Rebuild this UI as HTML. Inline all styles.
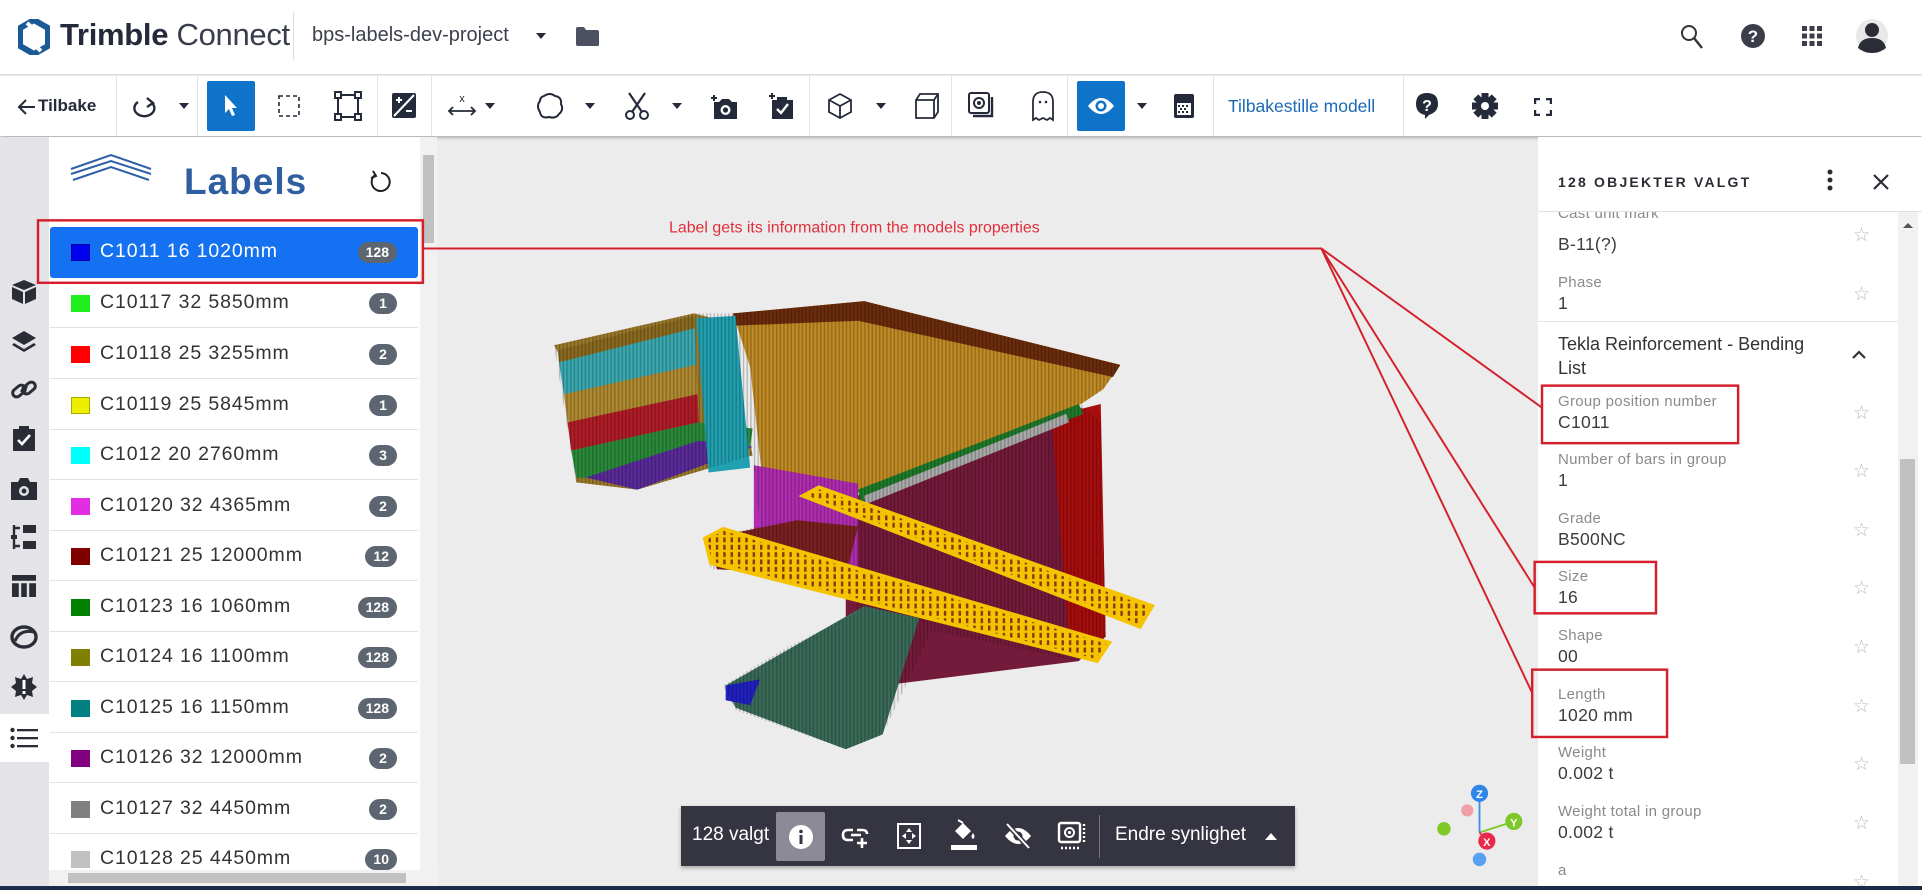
<!DOCTYPE html>
<html><head><meta charset="utf-8">
<style>
*{box-sizing:border-box;margin:0;padding:0}
body{width:1922px;height:890px;overflow:hidden;position:relative;background:#ececec;font-family:"Liberation Sans",sans-serif;color:#252a3a}
.abs{position:absolute}
#hdr{left:0;top:0;width:1922px;height:75px;background:#fff;border-bottom:1px solid #ddd}
#tb{left:0;top:76px;width:1922px;height:60px;background:#fff;box-shadow:0 2px 3px rgba(0,0,0,.25)}
.dv{position:absolute;top:0;width:1px;height:60px;background:#e2e2e2}
.ic{position:absolute;top:15px}
.car{position:absolute;top:27px;width:0;height:0;border-left:5px solid transparent;border-right:5px solid transparent;border-top:6px solid #252a3a}
#rail{left:0;top:137px;width:49px;height:750px;background:#e4e4e8}
#panel{left:49px;top:137px;width:372px;height:733px;background:#fff}
.row{position:absolute;left:50px;width:368px;height:50px;border-bottom:1px solid #e3e3e3;background:#fff}
.sw{position:absolute;left:21px;top:17px;width:19px;height:17px}
.rt{position:absolute;left:50px;top:13px;font-size:19.5px;letter-spacing:.9px;color:#333}
.bd{position:absolute;right:21px;top:15px;height:21px;min-width:28px;padding:0 8px;border-radius:11px;background:#5d6670;color:#fff;font-size:14px;font-weight:bold;line-height:21px;text-align:center}
#rp{left:1538px;top:137px;width:384px;height:750px;background:#fff}
.pl{position:absolute;left:20px;font-size:15px;color:#8a8a8a;letter-spacing:.3px}
.pv{position:absolute;left:20px;font-size:17.5px;color:#3c3c3c;letter-spacing:.3px}
.st{position:absolute;left:315px;font-size:19px;color:#bbb}
</style></head><body>

<!-- header -->
<div id="hdr" class="abs">
  <svg class="abs" style="left:18px;top:19px" width="32" height="36" viewBox="0 0 32 36">
    <path d="M16 1 L30 9 L30 27 L16 35 L2 27 L2 9 Z" fill="none" stroke="#1a5a96" stroke-width="6"/>
    <path d="M9 4 L18 12 M23 32 L14 24" stroke="#fff" stroke-width="4"/>
  </svg>
  <div class="abs" style="left:60px;top:17px;font-size:31px;color:#252a3a;letter-spacing:-.3px"><b style="font-weight:600">Trimble</b> <span style="font-weight:300;color:#3a3e4c">Connect</span></div>
  <div class="abs" style="left:293px;top:12px;width:1px;height:48px;background:#ddd"></div>
  <div class="abs" style="left:312px;top:24px;font-size:20px;color:#3c3f4c">bps-labels-dev-project</div>
  <div class="car" style="left:536px;top:33px"></div>
  <svg class="abs" style="left:575px;top:26px" width="25" height="21" viewBox="0 0 25 21"><path d="M1 3 Q1 1 3 1 L9 1 L11 4 L22 4 Q24 4 24 6 L24 19 Q24 20 22 20 L3 20 Q1 20 1 18Z" fill="#4d5060"/></svg>
  <svg class="abs" style="left:1680px;top:24px" width="24" height="26" viewBox="0 0 24 26"><circle cx="9" cy="9" r="7" fill="none" stroke="#333" stroke-width="2"/><path d="M14 14 L22 24" stroke="#333" stroke-width="2.4"/></svg>
  <svg class="abs" style="left:1740px;top:22px" width="26" height="28" viewBox="0 0 26 28"><circle cx="13" cy="14" r="12" fill="#3b3e48"/><text x="13" y="20" font-size="17" font-weight="bold" fill="#fff" text-anchor="middle" font-family="Liberation Sans">?</text></svg>
  <svg class="abs" style="left:1802px;top:26px" width="20" height="20" viewBox="0 0 20 20" fill="#3b3e48"><rect x="0" y="0" width="5" height="5"/><rect x="7.5" y="0" width="5" height="5"/><rect x="15" y="0" width="5" height="5"/><rect x="0" y="7.5" width="5" height="5"/><rect x="7.5" y="7.5" width="5" height="5"/><rect x="15" y="7.5" width="5" height="5"/><rect x="0" y="15" width="5" height="5"/><rect x="7.5" y="15" width="5" height="5"/><rect x="15" y="15" width="5" height="5"/></svg>
  <svg class="abs" style="left:1855px;top:18px" width="34" height="36" viewBox="0 0 34 36"><ellipse cx="17" cy="18" rx="16" ry="17" fill="#e8e8ea"/><circle cx="17" cy="12" r="7" fill="#2b2d36"/><path d="M3 30 Q5 20 17 20 Q29 20 31 30 Q25 35 17 35 Q9 35 3 30Z" fill="#2b2d36"/></svg>
</div>

<!-- toolbar -->
<div id="tb" class="abs">
  <svg class="ic" style="left:16px;top:22px" width="20" height="18" viewBox="0 0 20 18"><path d="M19 9 H3 M10 2 L3 9 L10 16" fill="none" stroke="#252a3a" stroke-width="2"/></svg>
  <div class="abs" style="left:38px;top:20px;font-size:17px;font-weight:bold;color:#252a3a">Tilbake</div>
  <div class="dv" style="left:116px"></div>
  <svg class="ic" style="left:132px;top:18px" width="28" height="26" viewBox="0 0 28 26"><path d="M6 8 A10 8 0 1 0 20 9" fill="none" stroke="#252a3a" stroke-width="2.4"/><path d="M15 4 L21 9 L15 13" fill="none" stroke="#252a3a" stroke-width="2.4"/></svg>
  <div class="car" style="left:179px"></div>
  <div class="dv" style="left:197px"></div>
  <div class="abs" style="left:207px;top:5px;width:48px;height:50px;background:#0f74c9;border-radius:2px"></div>
  <svg class="ic" style="left:223px;top:18px" width="16" height="24" viewBox="0 0 16 24"><path d="M2 1 L2 19 L6 15 L9 22 L12 21 L9 14 L14 14 Z" fill="#fff"/></svg>
  <svg class="ic" style="left:277px;top:18px" width="24" height="24" viewBox="0 0 24 24"><rect x="2" y="2" width="20" height="20" fill="none" stroke="#252a3a" stroke-width="1.6" stroke-dasharray="4 3"/></svg>
  <svg class="ic" style="left:334px;top:15px" width="28" height="30" viewBox="0 0 28 30"><rect x="4" y="4" width="20" height="22" fill="none" stroke="#252a3a" stroke-width="2"/><g fill="#fff" stroke="#252a3a" stroke-width="2"><rect x="1" y="1" width="6" height="6"/><rect x="21" y="1" width="6" height="6"/><rect x="1" y="23" width="6" height="6"/><rect x="21" y="23" width="6" height="6"/></g></svg>
  <div class="dv" style="left:377px"></div>
  <svg class="ic" style="left:391px;top:16px" width="26" height="27" viewBox="0 0 26 27"><rect x="1" y="1" width="24" height="25" rx="2" fill="#252a3a"/><path d="M3 24 L23 3" stroke="#fff" stroke-width="2"/><path d="M5 8 H11 M8 5 V11 M15 19 H21" stroke="#fff" stroke-width="2"/></svg>
  <div class="dv" style="left:431px"></div>
  <svg class="ic" style="left:447px;top:15px" width="30" height="30" viewBox="0 0 30 30"><text x="15" y="11" font-size="11" text-anchor="middle" fill="#252a3a" font-family="Liberation Sans">x</text><path d="M2 20 H28 M6 16 L2 20 L6 24 M24 16 L28 20 L24 24" fill="none" stroke="#252a3a" stroke-width="1.8"/></svg>
  <div class="car" style="left:485px"></div>
  <svg class="ic" style="left:536px;top:16px" width="28" height="28" viewBox="0 0 28 28"><path d="M8 4 Q14 0 19 4 Q26 5 25 12 Q28 18 23 22 Q20 27 13 25 Q5 27 4 20 Q0 14 4 9 Q4 5 8 4Z" fill="none" stroke="#252a3a" stroke-width="2"/></svg>
  <div class="car" style="left:585px"></div>
  <svg class="ic" style="left:624px;top:15px" width="26" height="30" viewBox="0 0 26 30"><circle cx="6" cy="24" r="4" fill="none" stroke="#252a3a" stroke-width="2"/><circle cx="20" cy="24" r="4" fill="none" stroke="#252a3a" stroke-width="2"/><path d="M8 21 L21 2 M18 21 L5 2" stroke="#252a3a" stroke-width="2.2"/></svg>
  <div class="car" style="left:672px"></div>
  <svg class="ic" style="left:711px;top:13px" width="28" height="32" viewBox="0 0 28 32"><path d="M3 6 V12 M0 9 H6" stroke="#252a3a" stroke-width="2"/><path d="M3 13 H8 L11 10 H18 L21 13 H26 V30 H3Z" fill="#252a3a"/><circle cx="14.5" cy="21" r="5" fill="#fff"/><circle cx="14.5" cy="21" r="2.6" fill="#252a3a"/></svg>
  <svg class="ic" style="left:769px;top:13px" width="26" height="32" viewBox="0 0 26 32"><path d="M3 4 V10 M0 7 H6" stroke="#252a3a" stroke-width="2"/><path d="M3 11 H8 V8 H18 V11 H24 V30 H3Z" fill="#252a3a"/><path d="M8 20 L12 24 L19 15" fill="none" stroke="#fff" stroke-width="2.4"/></svg>
  <div class="dv" style="left:809px"></div>
  <svg class="ic" style="left:827px;top:16px" width="26" height="28" viewBox="0 0 26 28"><path d="M13 2 L24 8 L24 20 L13 26 L2 20 L2 8Z M2 8 L13 14 L24 8 M13 14 V26" fill="none" stroke="#252a3a" stroke-width="1.8"/></svg>
  <div class="car" style="left:876px"></div>
  <svg class="ic" style="left:914px;top:16px" width="26" height="28" viewBox="0 0 26 28"><path d="M6 2 H24 V20 L20 26 H2 V8Z M2 8 H20 V26 M20 8 L24 2" fill="none" stroke="#252a3a" stroke-width="1.8"/></svg>
  <div class="dv" style="left:951px"></div>
  <svg class="ic" style="left:967px;top:15px" width="28" height="28" viewBox="0 0 28 28"><rect x="2" y="2" width="20" height="20" rx="2" fill="none" stroke="#252a3a" stroke-width="2"/><circle cx="12" cy="12" r="5" fill="none" stroke="#252a3a" stroke-width="2"/><circle cx="12" cy="12" r="2" fill="#252a3a"/><path d="M25 6 V25 H6" fill="none" stroke="#252a3a" stroke-width="2.4"/></svg>
  <svg class="ic" style="left:1031px;top:14px" width="24" height="32" viewBox="0 0 24 32"><path d="M2 30 V12 Q2 2 12 2 Q22 2 22 12 V30 L19 28 L16 30 L12 28 L8 30 L5 28Z" fill="none" stroke="#252a3a" stroke-width="1.8"/><circle cx="9" cy="12" r="1.3" fill="#252a3a"/><circle cx="15" cy="12" r="1.3" fill="#252a3a"/></svg>
  <div class="dv" style="left:1067px"></div>
  <div class="abs" style="left:1077px;top:5px;width:48px;height:50px;background:#0f74c9;border-radius:2px"></div>
  <svg class="ic" style="left:1087px;top:20px" width="28" height="20" viewBox="0 0 28 20"><path d="M1 10 Q14 -6 27 10 Q14 26 1 10Z" fill="#fff"/><circle cx="14" cy="10" r="5.5" fill="#0f74c9"/><circle cx="14" cy="10" r="3" fill="#fff"/></svg>
  <div class="car" style="left:1137px"></div>
  <svg class="ic" style="left:1173px;top:17px" width="22" height="26" viewBox="0 0 22 26"><rect x="1" y="1" width="20" height="24" rx="2" fill="#252a3a"/><rect x="4" y="10" width="14" height="12" fill="#fff"/><g fill="#252a3a"><rect x="5" y="12" width="2" height="2"/><rect x="9" y="12" width="2" height="2"/><rect x="13" y="12" width="2" height="2"/><rect x="7" y="15" width="2" height="2"/><rect x="11" y="15" width="2" height="2"/><rect x="5" y="18" width="2" height="2"/><rect x="9" y="18" width="2" height="2"/><rect x="13" y="18" width="2" height="2"/></g></svg>
  <div class="dv" style="left:1213px"></div>
  <div class="abs" style="left:1228px;top:20px;font-size:17.5px;color:#1b6ab5">Tilbakestille modell</div>
  <div class="dv" style="left:1403px"></div>
  <svg class="ic" style="left:1415px;top:16px" width="24" height="28" viewBox="0 0 24 28"><path d="M12 1 Q23 1 23 12 Q23 20 14 23 L10 27 L10 23 Q1 21 1 12 Q1 1 12 1Z" fill="#252a3a"/><text x="12" y="19" font-size="16" font-weight="bold" fill="#fff" text-anchor="middle" font-family="Liberation Sans">?</text></svg>
  <svg class="ic" style="left:1472px;top:17px" width="26" height="26" viewBox="0 0 26 26"><g transform="translate(13 13)" fill="#252a3a"><rect x="-3.5" y="-13" width="7" height="26"/><rect x="-3.5" y="-13" width="7" height="26" transform="rotate(45)"/><rect x="-3.5" y="-13" width="7" height="26" transform="rotate(90)"/><rect x="-3.5" y="-13" width="7" height="26" transform="rotate(135)"/><circle r="9"/><circle r="4" fill="#fff"/></g></svg>
  <svg class="ic" style="left:1534px;top:22px" width="18" height="18" viewBox="0 0 18 18"><path d="M1 6 V1 H6 M12 1 H17 V6 M17 12 V17 H12 M6 17 H1 V12" fill="none" stroke="#252a3a" stroke-width="2.4"/></svg>
</div>

<!-- left rail -->
<div id="rail" class="abs">
  <svg class="abs" style="left:11px;top:142px" width="26" height="26" viewBox="0 0 26 26"><path d="M13 1 L25 6 L13 11 L1 6Z" fill="#2b2d36"/><path d="M1 8 L12 13 V25 L1 20Z M25 8 L14 13 V25 L25 20Z" fill="#2b2d36"/></svg>
  <svg class="abs" style="left:11px;top:193px" width="26" height="24" viewBox="0 0 26 24"><path d="M13 1 L25 8 L13 15 L1 8Z" fill="#2b2d36"/><path d="M3 13 L13 19 L23 13 L25 15 L13 22 L1 15Z" fill="#2b2d36"/></svg>
  <svg class="abs" style="left:10px;top:240px" width="28" height="26" viewBox="0 0 28 26"><path d="M11 15 L17 9" stroke="#2b2d36" stroke-width="3"/><rect x="2" y="10" width="14" height="8" rx="4" transform="rotate(-40 9 14)" fill="none" stroke="#2b2d36" stroke-width="3"/><rect x="12" y="7" width="14" height="8" rx="4" transform="rotate(-40 19 11)" fill="none" stroke="#2b2d36" stroke-width="3"/></svg>
  <svg class="abs" style="left:12px;top:287px" width="24" height="28" viewBox="0 0 24 28"><path d="M1 5 H7 V2 H17 V5 H23 V27 H1Z" fill="#2b2d36"/><path d="M6 16 L10 20 L18 11" fill="none" stroke="#fff" stroke-width="2.6"/></svg>
  <svg class="abs" style="left:10px;top:340px" width="28" height="24" viewBox="0 0 28 24"><path d="M1 5 H8 L10 1 H18 L20 5 H27 V23 H1Z" fill="#2b2d36"/><circle cx="14" cy="14" r="5" fill="#e4e4e8"/><circle cx="14" cy="14" r="2.5" fill="#2b2d36"/></svg>
  <svg class="abs" style="left:11px;top:387px" width="26" height="26" viewBox="0 0 26 26"><path d="M3 1 V25 M3 4 H9 M3 22 H9" stroke="#2b2d36" stroke-width="2.4" fill="none"/><rect x="12" y="1" width="13" height="8" fill="#2b2d36"/><rect x="12" y="17" width="13" height="8" fill="#2b2d36"/><rect x="0" y="11" width="6" height="4" fill="#2b2d36"/></svg>
  <svg class="abs" style="left:11px;top:437px" width="26" height="24" viewBox="0 0 26 24"><rect x="1" y="1" width="24" height="22" fill="#2b2d36"/><path d="M1 8 H25 M9 8 V23 M17 8 V23" stroke="#e4e4e8" stroke-width="2.4"/></svg>
  <svg class="abs" style="left:10px;top:486px" width="28" height="28" viewBox="0 0 28 28"><ellipse cx="14" cy="14" rx="12" ry="10" fill="none" stroke="#2b2d36" stroke-width="3.4"/><path d="M5 18 Q10 6 24 9" fill="none" stroke="#2b2d36" stroke-width="3"/></svg>
  <svg class="abs" style="left:10px;top:536px" width="28" height="28" viewBox="0 0 28 28"><path d="M14 1 L17 6 L23 4 L22 10 L27 14 L22 18 L23 24 L17 22 L14 27 L11 22 L5 24 L6 18 L1 14 L6 10 L5 4 L11 6Z" fill="#2b2d36"/><rect x="12.5" y="7" width="3" height="9" fill="#fff"/><rect x="12.5" y="18" width="3" height="3" fill="#fff"/></svg>
  <div class="abs" style="left:0;top:577px;width:49px;height:48px;background:#fff"></div>
  <svg class="abs" style="left:10px;top:590px" width="28" height="22" viewBox="0 0 28 22" fill="#2b2d36"><circle cx="2.5" cy="3" r="2.2"/><circle cx="2.5" cy="11" r="2.2"/><circle cx="2.5" cy="19" r="2.2"/><rect x="7" y="2" width="21" height="2.3"/><rect x="7" y="10" width="21" height="2.3"/><rect x="7" y="18" width="21" height="2.3"/></svg>
</div>

<!-- labels panel -->
<div id="panel" class="abs">
  <svg class="abs" style="left:20px;top:16px" width="84" height="30" viewBox="0 0 84 30"><g fill="none" stroke="#2f5fa8" stroke-width="2"><path d="M2 16 L42 2 L82 16"/><path d="M2 21 L42 8 L82 21"/><path d="M4 27 L42 14 L80 27"/></g></svg>
  <div class="abs" style="left:135px;top:24px;font-size:37px;color:#2f5fa0;font-weight:bold;letter-spacing:1px">Labels</div>
  <svg class="abs" style="left:320px;top:33px" width="24" height="24" viewBox="0 0 24 24"><path d="M6 5 A9 9 0 1 0 12 3" fill="none" stroke="#222" stroke-width="2"/><path d="M4 1 L7 6 L2 8" fill="none" stroke="#222" stroke-width="2"/></svg>
  <div class="abs" style="left:371px;top:0;width:17px;height:733px;background:#f1f1f1"></div>
  <div class="abs" style="left:374px;top:18px;width:11px;height:88px;background:#c1c1c1"></div>
</div>
<div class="abs" style="left:49px;top:870px;width:390px;height:16px;background:#f1f1f1"></div>
<div class="abs" style="left:68px;top:873px;width:338px;height:10px;background:#c1c1c1"></div>

<div class="row" style="top:227px;height:51px;background:#1371f2;border-radius:3px;border:none"><div class="sw" style="background:#0000ee;border:1px solid #00a"></div><div class="rt" style="color:#fff">C1011 16 1020mm</div><div class="bd">128</div></div>
<div class="row" style="top:278px"><div class="sw" style="background:#1ef01e"></div><div class="rt">C10117 32 5850mm</div><div class="bd">1</div></div>
<div class="row" style="top:329px"><div class="sw" style="background:#f00"></div><div class="rt">C10118 25 3255mm</div><div class="bd">2</div></div>
<div class="row" style="top:380px"><div class="sw" style="background:#eeee00;border:1px solid #aa0"></div><div class="rt">C10119 25 5845mm</div><div class="bd">1</div></div>
<div class="row" style="top:430px"><div class="sw" style="background:#0ff"></div><div class="rt">C1012 20 2760mm</div><div class="bd">3</div></div>
<div class="row" style="top:481px"><div class="sw" style="background:#e22ee2"></div><div class="rt">C10120 32 4365mm</div><div class="bd">2</div></div>
<div class="row" style="top:531px"><div class="sw" style="background:#800000"></div><div class="rt">C10121 25 12000mm</div><div class="bd">12</div></div>
<div class="row" style="top:582px"><div class="sw" style="background:#008000"></div><div class="rt">C10123 16 1060mm</div><div class="bd">128</div></div>
<div class="row" style="top:632px"><div class="sw" style="background:#808000"></div><div class="rt">C10124 16 1100mm</div><div class="bd">128</div></div>
<div class="row" style="top:683px"><div class="sw" style="background:#008080"></div><div class="rt">C10125 16 1150mm</div><div class="bd">128</div></div>
<div class="row" style="top:733px"><div class="sw" style="background:#800080"></div><div class="rt">C10126 32 12000mm</div><div class="bd">2</div></div>
<div class="row" style="top:784px"><div class="sw" style="background:#808080"></div><div class="rt">C10127 32 4450mm</div><div class="bd">2</div></div>
<div class="row" style="top:834px;height:36px;overflow:hidden;border:none"><div class="sw" style="background:#c0c0c0"></div><div class="rt">C10128 25 4450mm</div><div class="bd">10</div></div>

<!-- right panel -->
<div id="rp" class="abs">
  <div class="abs" style="left:20px;top:37px;font-size:14px;font-weight:bold;letter-spacing:2.2px;color:#2c2c34">128 OBJEKTER VALGT</div>
  <svg class="abs" style="left:288px;top:32px" width="8" height="22" viewBox="0 0 8 22" fill="#2b2d36"><circle cx="4" cy="3" r="2.5"/><circle cx="4" cy="11" r="2.5"/><circle cx="4" cy="19" r="2.5"/></svg>
  <svg class="abs" style="left:334px;top:36px" width="18" height="18" viewBox="0 0 18 18"><path d="M2 2 L16 16 M16 2 L2 16" stroke="#2b2d36" stroke-width="2.2"/></svg>
  <div class="abs" style="left:0;top:74px;width:384px;height:1px;background:#e0e0e0"></div>
  <div class="abs" style="left:0;top:75px;width:384px;height:675px;overflow:hidden">
    <div class="pl" style="top:-7px">Cast unit mark</div>
    <div class="pv" style="top:22px">B-11(?)</div>
    <div class="st" style="top:12px">☆</div>
    <div class="pl" style="top:62px">Phase</div>
    <div class="pv" style="top:81px">1</div>
    <div class="st" style="top:71px">☆</div>
    <div class="abs" style="left:0;top:109px;width:360px;height:1px;background:#e6e6e6"></div>
    <div class="abs" style="left:20px;top:120px;font-size:18px;color:#333;line-height:24px;font-weight:500">Tekla Reinforcement - Bending<br>List</div>
    <svg class="abs" style="left:313px;top:138px" width="16" height="10" viewBox="0 0 16 10"><path d="M2 8 L8 2 L14 8" fill="none" stroke="#333" stroke-width="2.2"/></svg>
    <div class="pl" style="top:181px">Group position number</div><div class="pv" style="top:200px">C1011</div><div class="st" style="top:190px">☆</div>
    <div class="pl" style="top:239px">Number of bars in group</div><div class="pv" style="top:258px">1</div><div class="st" style="top:248px">☆</div>
    <div class="pl" style="top:298px">Grade</div><div class="pv" style="top:317px">B500NC</div><div class="st" style="top:307px">☆</div>
    <div class="pl" style="top:356px">Size</div><div class="pv" style="top:375px">16</div><div class="st" style="top:365px">☆</div>
    <div class="pl" style="top:415px">Shape</div><div class="pv" style="top:434px">00</div><div class="st" style="top:424px">☆</div>
    <div class="pl" style="top:474px">Length</div><div class="pv" style="top:493px">1020 mm</div><div class="st" style="top:483px">☆</div>
    <div class="pl" style="top:532px">Weight</div><div class="pv" style="top:551px">0.002 t</div><div class="st" style="top:541px">☆</div>
    <div class="pl" style="top:591px">Weight total in group</div><div class="pv" style="top:610px">0.002 t</div><div class="st" style="top:600px">☆</div>
    <div class="pl" style="top:650px">a</div><div class="st" style="top:659px">☆</div>
  </div>
  <div class="abs" style="left:360px;top:75px;width:20px;height:675px;background:#f1f1f1"></div>
  <div class="abs" style="left:362px;top:322px;width:15px;height:305px;background:#c1c1c1"></div>
  <div class="abs" style="left:365px;top:86px;border-left:5px solid transparent;border-right:5px solid transparent;border-bottom:5px solid #555"></div>
</div>

<!-- model + annotations (display coordinates) -->
<svg class="abs" style="left:0;top:0" width="1922" height="890" viewBox="0 0 1568 727" preserveAspectRatio="none">
  <defs>
    <pattern id="vl" width="3" height="6" patternUnits="userSpaceOnUse"><rect width="1.2" height="6" fill="rgba(0,0,0,.22)"/></pattern>
    <pattern id="yl" width="6" height="6" patternUnits="userSpaceOnUse"><rect width="6" height="6" fill="#f5c400"/><rect x="2" y="1" width="2" height="4" fill="#8a3a10"/></pattern>
    <clipPath id="mc">
      <polygon points="598,256 705,246 914,298 900,318 882,330 898,345 902,520 880,540 760,515 720,600 690,612 600,580 590,560 640,530 700,500 690,470 580,465 575,440 620,430 614,372 520,400 470,394 452,282 566,256"/>
    </clipPath>
  </defs>
  <g>
  <polygon points="598,256 705,246 914,298 900,318 882,330 720,405 622,392 612,300" fill="#c08a24"/>
  <polygon points="598,256 705,246 914,298 908,308 700,262 600,266" fill="#6a2c0c"/>
  <polygon points="452,282 566,256 590,262 614,372 520,400 470,394 462,300" fill="#9a7a2a"/>
  <polygon points="455,286 566,258 567,268 456,296" fill="#8a6a20"/>
  <polygon points="456,296 567,268 568,298 460,322" fill="#3aa8b0"/>
  <polygon points="460,322 568,298 569,322 463,345" fill="#b08a30"/>
  <polygon points="463,345 569,322 570,345 466,368" fill="#b01c28"/>
  <polygon points="466,368 570,345 614,350 612,365 520,392 470,390" fill="#2a8a3a"/>
  <polygon points="478,390 570,360 614,365 520,400" fill="#5a2a9a"/>
  <polygon points="568,260 600,258 612,382 578,386" fill="#20a0b0"/>
  <polygon points="702,402 880,332 898,345 902,520 880,540 720,560 690,610 690,420" fill="#741a3a"/>
  <polygon points="858,340 898,330 902,520 872,530" fill="#a80d0d"/>
  <polygon points="615,380 700,395 700,470 615,458" fill="#b02cb0"/>
  <polygon points="700,400 880,330 884,338 702,410" fill="#1f7a2a"/>
  <polygon points="705,405 870,338 872,345 706,412" fill="#aaaaaa"/>
  <polygon points="576,440 650,425 700,430 690,470 585,465" fill="#7a2020"/>
  <polygon points="592,560 705,495 750,505 720,600 690,612 600,578" fill="#3a6a58"/>
  <polygon points="592,560 620,555 612,576 592,572" fill="#2020c0"/>
  </g>
  <rect x="440" y="240" width="480" height="380" fill="url(#vl)" clip-path="url(#mc)"/>
  <polygon points="655,405 668,398 940,495 930,512" fill="url(#yl)" stroke="#f5c400" stroke-width="3"/>
  <polygon points="575,440 590,432 905,525 895,540 580,460" fill="url(#yl)" stroke="#f5c400" stroke-width="3"/>
  <text x="697" y="190" font-size="13" fill="#e0303c" text-anchor="middle" font-family="Liberation Sans">Label gets its information from the models properties</text>
  <polyline points="345,203 1078,203 1258,333" fill="none" stroke="#d3202c" stroke-width="1.6"/>
  <line x1="1078" y1="203" x2="1252" y2="480" stroke="#d3202c" stroke-width="1.6"/>
  <line x1="1078" y1="203" x2="1250" y2="566" stroke="#d3202c" stroke-width="1.6"/>
  <rect x="31" y="180" width="314" height="51" fill="none" stroke="#d3202c" stroke-width="2"/>
  <rect x="1258" y="315" width="160" height="47" fill="none" stroke="#d3202c" stroke-width="2"/>
  <rect x="1252" y="459" width="99" height="42" fill="none" stroke="#d3202c" stroke-width="2"/>
  <rect x="1250" y="547" width="110" height="55" fill="none" stroke="#d3202c" stroke-width="2"/>
  <line x1="1207" y1="648" x2="1207" y2="680" stroke="#3b8ee8" stroke-width="1.5"/>
  <line x1="1207" y1="680" x2="1235" y2="671" stroke="#7ec829" stroke-width="1.5"/>
  <line x1="1207" y1="680" x2="1213" y2="687" stroke="#e8294a" stroke-width="1.5"/>
  <circle cx="1197" cy="662" r="5" fill="#f0a0a8"/>
  <circle cx="1178" cy="677" r="5.5" fill="#7ec829"/>
  <circle cx="1207" cy="702" r="5.5" fill="#5aa0f0"/>
  <circle cx="1207" cy="648" r="7" fill="#2d86e8"/><text x="1207" y="652" font-size="9" font-weight="bold" fill="#fff" text-anchor="middle" font-family="Liberation Sans">Z</text>
  <circle cx="1235" cy="671" r="7" fill="#7ec829"/><text x="1235" y="675" font-size="9" font-weight="bold" fill="#fff" text-anchor="middle" font-family="Liberation Sans">Y</text>
  <circle cx="1213" cy="687" r="7" fill="#e8294a"/><text x="1213" y="691" font-size="9" font-weight="bold" fill="#fff" text-anchor="middle" font-family="Liberation Sans">X</text>
</svg>

<!-- bottom action bar -->
<div class="abs" style="left:681px;top:806px;width:614px;height:60px;background:#353441;box-shadow:0 2px 4px rgba(0,0,0,.3)">
  <div class="abs" style="left:11px;top:18px;font-size:19px;color:#fff">128 valgt</div>
  <div class="abs" style="left:95px;top:6px;width:49px;height:49px;background:#8b8a96;border-radius:2px"></div>
  <svg class="abs" style="left:107px;top:18px" width="26" height="26" viewBox="0 0 26 26"><circle cx="13" cy="13" r="12" fill="#fff"/><rect x="11.5" y="11" width="3" height="9" fill="#353441"/><circle cx="13" cy="7.5" r="1.8" fill="#353441"/></svg>
  <svg class="abs" style="left:160px;top:20px" width="28" height="22" viewBox="0 0 28 22"><path d="M12 4 H7 Q2 4 2 9 Q2 14 7 14 H12 M10 9 H20 M16 4 H21 Q26 4 26 8" fill="none" stroke="#fff" stroke-width="2.6"/><path d="M21 12 V22 M16 17 H26" stroke="#fff" stroke-width="2.6"/></svg>
  <svg class="abs" style="left:215px;top:16px" width="26" height="28" viewBox="0 0 26 28"><rect x="2" y="2" width="22" height="24" fill="none" stroke="#fff" stroke-width="2"/><path d="M13 6 L10 10 H16Z M13 22 L10 18 H16Z M6 14 L10 11 V17Z M20 14 L16 11 V17Z" fill="#fff"/></svg>
  <svg class="abs" style="left:269px;top:12px" width="28" height="34" viewBox="0 0 28 34"><path d="M5 13 L13 5 L21 13 L13 21Z" fill="#fff"/><path d="M8 2 L13 5" stroke="#fff" stroke-width="2"/><path d="M23 15 Q26 19 23 21 Q20 19 23 15Z" fill="#fff"/><rect x="1" y="27" width="26" height="5" fill="#fff"/></svg>
  <svg class="abs" style="left:322px;top:16px" width="30" height="28" viewBox="0 0 30 28"><path d="M2 14 Q15 -2 28 14 Q15 30 2 14Z" fill="#fff"/><circle cx="15" cy="14" r="4.5" fill="#353441"/><path d="M4 2 L26 26" stroke="#353441" stroke-width="5"/><path d="M4 2 L26 26" stroke="#fff" stroke-width="2"/></svg>
  <svg class="abs" style="left:376px;top:15px" width="30" height="30" viewBox="0 0 30 30"><rect x="2" y="2" width="21" height="19" rx="2" fill="none" stroke="#fff" stroke-width="2.4"/><circle cx="12.5" cy="11.5" r="4.5" fill="none" stroke="#fff" stroke-width="2"/><circle cx="12.5" cy="11.5" r="1.6" fill="#fff"/><path d="M27 3 V22 M4 27 H24" stroke="#fff" stroke-width="2.4" stroke-dasharray="2 2"/></svg>
  <div class="abs" style="left:418px;top:9px;width:1px;height:43px;background:#777"></div>
  <div class="abs" style="left:434px;top:18px;font-size:19px;color:#fff;font-weight:500">Endre synlighet</div>
  <div class="abs" style="left:584px;top:27px;border-left:6px solid transparent;border-right:6px solid transparent;border-bottom:7px solid #fff"></div>
</div>

<div class="abs" style="left:0;top:886px;width:1922px;height:4px;background:#1d2b4a"></div>
</body></html>
